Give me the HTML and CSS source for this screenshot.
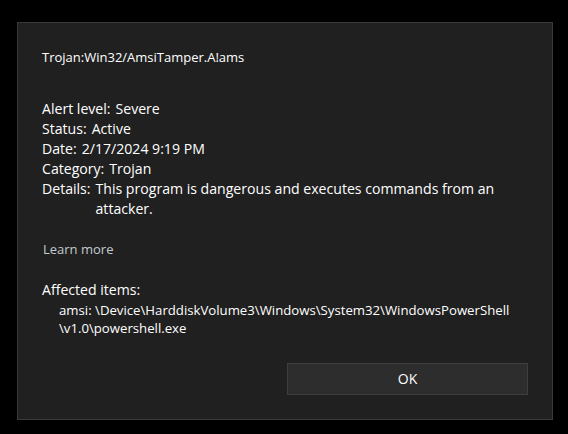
FILE: index.html
```html
<!DOCTYPE html>
<html>
<head>
<meta charset="utf-8">
<link rel="stylesheet" href="styles.css">
</head>
<body>
<div class="dialog">
  <div class="title">Trojan:Win32/AmsiTamper.A!ams</div>
  <div class="info">
    <div class="row"><span class="label">Alert level:</span><span class="value">Severe</span></div>
    <div class="row"><span class="label">Status:</span><span class="value">Active</span></div>
    <div class="row"><span class="label">Date:</span><span class="value">2/17/2024 9:19 PM</span></div>
    <div class="row"><span class="label">Category:</span><span class="value">Trojan</span></div>
    <div class="row"><span class="label">Details:</span><span class="value">This program is dangerous and executes commands from an attacker.</span></div>
  </div>
  <div class="learn">Learn more</div>
  <div class="affected">Affected items:</div>
  <div class="items">amsi: \Device\HarddiskVolume3\Windows\System32\WindowsPowerShell<br>\v1.0\powershell.exe</div>
  <div class="footer"><button class="ok">OK</button></div>
</div>
</body>
</html>
```
FILE: styles.css
```css
html, body { margin: 0; padding: 0; background: #000; }
body { font-family: "Open Sans", "Noto Sans", sans-serif; color: #fff; }
.dialog {
  box-sizing: border-box;
  margin: 22px 0 0 17px;
  width: 536px;
  height: 398px;
  background: #202020;
  border: 1px solid #3a3a3a;
  padding: 0 24px 0 24px;
  display: flex;
  flex-direction: column;
}
.title { font-size: 13px; line-height: 20px; margin-top: 24px; }
.info { margin-top: 32px; font-size: 14.1px; line-height: 20px; }
.row { display: flex; gap: 5px; }
.label { white-space: nowrap; }
.value { width: 410px; }
.learn { margin-top: 20px; font-size: 13px; color: #c3cbcf; line-height: 20px; padding-left: 1px; }
.affected { margin-top: 21px; font-size: 14.1px; line-height: 20px; }
.items { margin-left: 17px; font-size: 13.2px; line-height: 18px; margin-top: 1px; }
.footer { margin-top: auto; margin-bottom: 24px; display: flex; justify-content: flex-end; }
.ok {
  width: 241px; height: 32px;
  background: #2d2d2d; border: 1px solid #3e3e3e; color: #fff;
  font-family: inherit; font-size: 14px; border-radius: 0;
  padding: 0 0 2px 0;
}
```
